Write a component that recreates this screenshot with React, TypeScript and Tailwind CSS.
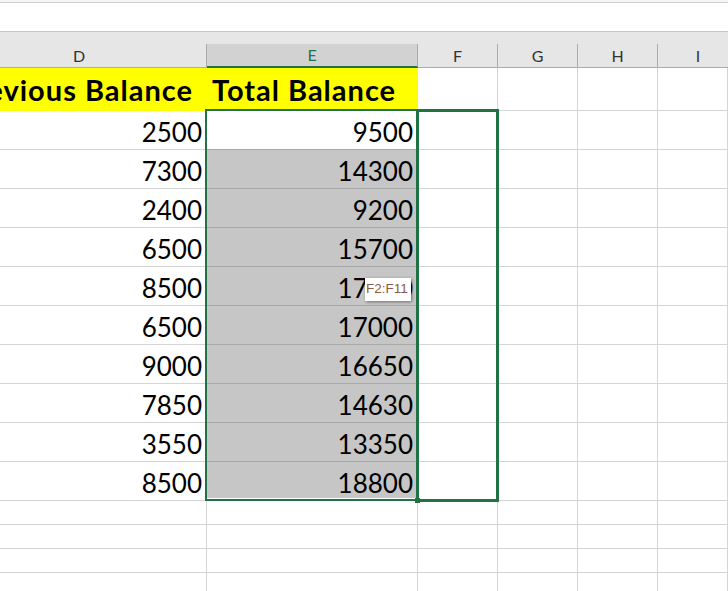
const prev = [2500, 7300, 2400, 6500, 8500, 6500, 9000, 7850, 3550, 8500];
const total = [9500, 14300, 9200, 15700, 17000, 17000, 16650, 14630, 13350, 18800];
const font = "font-['Lato','Liberation_Sans',sans-serif]";

function Head({ label, cls = "" }: { label: string; cls?: string }) {
  return (
    <div className={`h-[24px] flex items-center justify-center text-[16px] border-r border-[#ababab] border-b border-b-[#ababab] ${cls}`}>
      {label}
    </div>
  );
}

function Empty({ h }: { h: string }) {
  return <div className={`${h} border-r border-b border-[#d4d4d4]`} />;
}

function Num({ v, cls = "" }: { v: number; cls?: string }) {
  return (
    <div className={`h-[39px] flex items-end justify-end pr-[4px] pb-[1px] text-[26px] leading-[34px] text-black border-r border-b ${cls}`}>
      <span className="relative top-[0.5px]">{v}</span>
    </div>
  );
}

export default function App() {
  return (
    <div className={`relative w-[728px] h-[591px] overflow-hidden bg-white ${font}`}>
      <div className="h-[3px] border-b border-[#d0d0d0] bg-[#f4f4f4]" />
      <div className="h-[29px] border-b border-[#c4c4c4] bg-white" />
      <div className="h-[12px] bg-[#e6e6e6]" />
      <div className="-ml-[48px] w-[776px] grid grid-cols-[255px_211px_80px_80px_80px_70px]">
        <Head label="D" cls="bg-[#e6e6e6] text-[#333]" />
        <Head label="E" cls="bg-[#d2d2d2] text-[#217346] !border-b-[#217346] border-b-2" />
        <Head label="F" cls="bg-[#e6e6e6] text-[#333]" />
        <Head label="G" cls="bg-[#e6e6e6] text-[#333]" />
        <Head label="H" cls="bg-[#e6e6e6] text-[#333]" />
        <Head label="I" cls="bg-[#e6e6e6] text-[#333] border-r-0 pl-[10px]" />

        <div className="h-[43px] overflow-hidden flex justify-end items-center pr-[13px] bg-[#ffff00] text-[29px] tracking-[1px] font-bold text-black whitespace-nowrap border-r border-[#ffff00]">
          Previous Balance
        </div>
        <div className="h-[43px] flex items-center pl-[5px] bg-[#ffff00] text-[29px] tracking-[1px] font-bold text-black whitespace-nowrap">
          Total Balance
        </div>
        <Empty h="h-[43px]" />
        <Empty h="h-[43px]" />
        <Empty h="h-[43px]" />
        <Empty h="h-[43px]" />

        {prev.map((p, i) => (
          <div key={p + "-" + i} className="contents">
            <Num v={p} cls="border-[#d4d4d4]" />
            <Num v={total[i]} cls={i === 0 ? "border-[#a8a8a8]" : "bg-[#c6c6c6] border-[#a8a8a8]"} />
            <Empty h="h-[39px]" />
            <Empty h="h-[39px]" />
            <Empty h="h-[39px]" />
            <Empty h="h-[39px]" />
          </div>
        ))}

        {[0, 1, 2, 3].map((r) => (
          <div key={r} className="contents">
            {[0, 1, 2, 3, 4, 5].map((c) => (
              <Empty key={c} h="h-[24px]" />
            ))}
          </div>
        ))}
      </div>

      {/* selection outlines */}
      <div className="absolute left-[205px] top-[109px] w-[213px] h-[392px] border-2 border-[#217346]">
        <div className="absolute inset-0 border-b border-white" />
      </div>
      <div className="absolute left-[416px] top-[109px] w-[83px] h-[393px] border-[3px] border-[#217346]" />
      <div className="absolute left-[415px] top-[498px] w-[5px] h-[5px] bg-[#217346]" />

      {/* range tooltip */}
      <div className="absolute left-[365px] top-[278px] w-[46px] h-[23px] bg-white shadow-[1px_1px_3px_rgba(0,0,0,0.45)] flex items-center pl-[1px] text-[13.5px] text-[#8a5a44] whitespace-nowrap font-['Liberation_Sans',sans-serif]">
        F2:F11
      </div>
    </div>
  );
}
